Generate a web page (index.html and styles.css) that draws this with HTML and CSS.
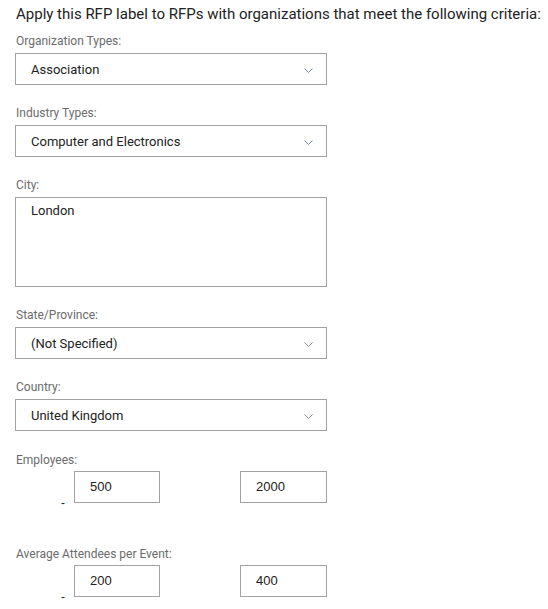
FILE: index.html
```html
<!DOCTYPE html>
<html>
<head>
<meta charset="utf-8">
<link rel="stylesheet" href="styles.css">
</head>
<body>
<div class="form">
  <p class="intro">Apply this RFP label to RFPs with organizations that meet the following criteria:</p>

  <div class="field">
    <div class="label">Organization Types:</div>
    <div class="select"><span>Association</span><svg class="chev" width="9" height="5" viewBox="0 0 9 5"><path d="M0.5 0.5 L4.5 4.5 L8.5 0.5" fill="none" stroke="#7a86a6" stroke-width="1"/></svg></div>
  </div>

  <div class="field">
    <div class="label">Industry Types:</div>
    <div class="select"><span>Computer and Electronics</span><svg class="chev" width="9" height="5" viewBox="0 0 9 5"><path d="M0.5 0.5 L4.5 4.5 L8.5 0.5" fill="none" stroke="#7a86a6" stroke-width="1"/></svg></div>
  </div>

  <div class="field">
    <div class="label">City:</div>
    <div class="textarea">London</div>
  </div>

  <div class="field">
    <div class="label">State/Province:</div>
    <div class="select"><span>(Not Specified)</span><svg class="chev" width="9" height="5" viewBox="0 0 9 5"><path d="M0.5 0.5 L4.5 4.5 L8.5 0.5" fill="none" stroke="#7a86a6" stroke-width="1"/></svg></div>
  </div>

  <div class="field">
    <div class="label">Country:</div>
    <div class="select"><span>United Kingdom</span><svg class="chev" width="9" height="5" viewBox="0 0 9 5"><path d="M0.5 0.5 L4.5 4.5 L8.5 0.5" fill="none" stroke="#7a86a6" stroke-width="1"/></svg></div>
  </div>

  <div class="field range-field">
    <div class="label">Employees:</div>
    <div class="range">
      <span class="dash">-</span>
      <div class="num">500</div>
      <div class="num num-max">2000</div>
    </div>
  </div>

  <div class="field range-field">
    <div class="label">Average Attendees per Event:</div>
    <div class="range">
      <span class="dash">-</span>
      <div class="num">200</div>
      <div class="num num-max">400</div>
    </div>
  </div>
</div>
</body>
</html>
```

FILE: styles.css
```css
html, body {
  margin: 0;
  padding: 0;
  background: #ffffff;
}

body {
  font-family: Roboto, "Liberation Sans", sans-serif;
  color: #222222;
}

.form {
  padding: 4px 0 0 15px;
  width: 312px;
}

.intro {
  margin: 0 0 9px 1px;
  font-size: 15px;
  line-height: 20px;
  white-space: nowrap;
  color: #222222;
}

.field {
  margin-bottom: 20px;
}

.label {
  font-size: 12px;
  line-height: 15px;
  padding: 1px 0 0 1px;
  margin: 0 0 4px 0;
  color: #6b6b6b;
}

.select {
  box-sizing: border-box;
  height: 32px;
  border: 1px solid #a2a2a6;
  display: flex;
  align-items: center;
  justify-content: space-between;
  padding: 0 13px 0 15px;
  font-size: 13px;
  color: #222222;
}

.chev {
  display: block;
  margin-top: 2px;
}

.textarea {
  box-sizing: border-box;
  height: 90px;
  border: 1px solid #a2a2a6;
  padding: 5px 15px;
  font-size: 13px;
  line-height: 16px;
}

.range-field {
  margin-bottom: 36px;
}

.range-field .label {
  padding-top: 2px;
  margin-bottom: 3px;
}

.range {
  display: flex;
  align-items: flex-start;
  height: 38px;
}

.dash {
  box-sizing: border-box;
  width: 59px;
  padding: 26px 0 0 46px;
  font-family: "Liberation Sans", Arial, sans-serif;
  font-size: 12px;
  line-height: 12px;
  color: #222222;
}

.num {
  box-sizing: border-box;
  width: 86px;
  height: 32px;
  border: 1px solid #a2a2a6;
  padding: 0 15px;
  font-family: "Liberation Sans", Arial, sans-serif;
  font-size: 13px;
  line-height: 30px;
  color: #222222;
}

.num-max {
  margin-left: 80px;
  width: 87px;
}
```
